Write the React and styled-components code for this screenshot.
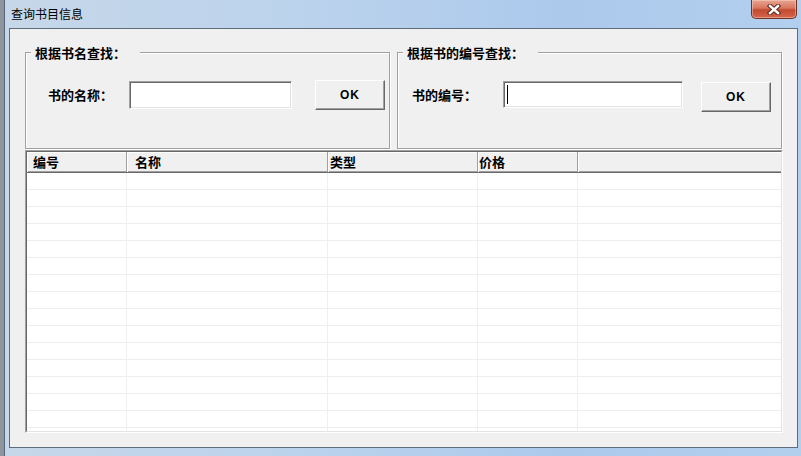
import React from "react";
import styled, { createGlobalStyle } from "styled-components";

const GlobalStyle = createGlobalStyle`
  html, body {
    margin: 0;
    padding: 0;
    background: #8e959c;
    overflow: hidden;
  }
  * {
    box-sizing: border-box;
  }
`;

const FONT = `"Noto Sans CJK SC", "DejaVu Sans", sans-serif`;

const columns = [
  { name: "编号", w: 100, pad: 6 },
  { name: "名称", w: 201, pad: 8 },
  { name: "类型", w: 150, pad: 2 },
  { name: "价格", w: 100, pad: 1 },
];

const rows = Array.from({ length: 16 });

const Window = styled.div`
  margin-left: 4px;
  width: 797px;
  height: 456px;
  border-left: 1px solid #55677a;
  background: linear-gradient(
    90deg,
    #c6d7e9 0%,
    #bcd3ec 35%,
    #acc9ec 70%,
    #b3cfee 100%
  );
  display: flex;
  flex-direction: column;
  font-family: ${FONT};
`;

const TitleBar = styled.div`
  height: 28px;
  display: flex;
  align-items: flex-start;
  padding-left: 6px;
  padding-right: 4px;
`;

const Title = styled.span`
  margin-top: 6px;
  font-size: 12px;
  line-height: 16px;
  color: #000;
`;

const CloseButton = styled.div`
  margin-left: auto;
  width: 46px;
  height: 19px;
  border: 1px solid #6e3326;
  border-top: none;
  border-radius: 0 0 5px 5px;
  background: linear-gradient(
    180deg,
    #e8a592 0%,
    #d9765e 45%,
    #c24a30 55%,
    #d5664c 100%
  );
  box-shadow: inset 0 0 0 1px rgba(255, 220, 210, 0.45);
  display: flex;
  align-items: center;
  justify-content: center;
`;

const Client = styled.div`
  margin: 0 3px 0 4px;
  height: 420px;
  border: 1px solid #5e6d7c;
  background: #f0f0f0;
  display: flex;
  flex-direction: column;
  padding: 23px 14px 14px 15px;
`;

const GroupRow = styled.div`
  display: flex;
  gap: 7px;
`;

const GroupBox = styled.div`
  position: relative;
  width: ${(p) => p.$w}px;
  height: 97px;
  border: 1px solid #a0a0a0;
  box-shadow: inset 1px 1px 0 #fff, 1px 1px 0 #fff;
  padding: 27px 0 0 ${(p) => p.$padLeft}px;
`;

const Legend = styled.span`
  position: absolute;
  top: -8px;
  left: 5px;
  padding: 0 14px 0 4px;
  background: #f0f0f0;
  font-size: 13px;
  line-height: 15px;
  font-weight: 700;
  color: #000;
`;

const FieldRow = styled.div`
  display: flex;
  align-items: flex-start;
`;

const Label = styled.span`
  width: ${(p) => p.$w}px;
  line-height: 30px;
  font-size: 13px;
  font-weight: 700;
  color: #000;
`;

const TextBox = styled.div`
  margin-top: 1px;
  width: ${(p) => p.$w}px;
  height: ${(p) => p.$h}px;
  background: #fff;
  border-top: 1px solid #a0a0a0;
  border-left: 1px solid #a0a0a0;
  border-right: 1px solid #fff;
  border-bottom: 1px solid #fff;
  box-shadow: inset 1px 1px 0 #696969, inset -1px -1px 0 #e3e3e3;
  padding: 3px 0 0 3px;
`;

const Caret = styled.span`
  display: block;
  width: 1px;
  height: 19px;
  background: #000;
`;

const OkButton = styled.div`
  margin-left: ${(p) => p.$gap}px;
  margin-top: ${(p) => p.$top}px;
  width: 70px;
  height: 30px;
  background: #f0f0f0;
  border-top: 1px solid #fff;
  border-left: 1px solid #fff;
  border-right: 1px solid #696969;
  border-bottom: 1px solid #696969;
  box-shadow: inset -1px -1px 0 #a0a0a0;
  display: flex;
  align-items: center;
  justify-content: center;
  font-family: "Liberation Sans", Arial, sans-serif;
  font-size: 12px;
  font-weight: 700;
  letter-spacing: 1px;
  color: #000;
`;

const ListView = styled.div`
  margin-top: 1px;
  flex: 1;
  border-top: 1px solid #a0a0a0;
  border-left: 1px solid #a0a0a0;
  border-right: 1px solid #fff;
  border-bottom: 1px solid #fff;
  overflow: hidden;
`;

const ListInner = styled.div`
  height: 100%;
  background: #fff;
  border-top: 1px solid #696969;
  border-left: 1px solid #696969;
  border-right: 1px solid #e3e3e3;
  border-bottom: 1px solid #e3e3e3;
  overflow: hidden;
`;

const HeaderRow = styled.div`
  display: flex;
  height: 21px;
  background: #f0f0f0;
  border-bottom: 1px solid #696969;
`;

const HeaderCell = styled.div`
  width: ${(p) => p.$w}px;
  flex: ${(p) => (p.$fill ? 1 : "none")};
  height: 100%;
  padding-left: ${(p) => p.$pad}px;
  border-right: ${(p) => (p.$fill ? "none" : "1px solid #a0a0a0")};
  box-shadow: inset 1px 1px 0 #fff, inset 0 -1px 0 #a0a0a0;
  font-size: 13px;
  line-height: 19px;
  font-weight: 700;
  color: #000;
`;

const Row = styled.div`
  display: flex;
  height: 17px;
  border-bottom: 1px solid #eeeeee;
`;

const Cell = styled.div`
  width: ${(p) => p.$w}px;
  flex: ${(p) => (p.$fill ? 1 : "none")};
  border-right: ${(p) => (p.$fill ? "none" : "1px solid #efefef")};
`;

const CloseIcon = () => (
  <svg width="14" height="11" viewBox="0 0 14 11">
    <path
      d="M3 2 L11 9 M11 2 L3 9"
      stroke="#5a2a20"
      strokeWidth="4.4"
      strokeLinecap="square"
    />
    <path
      d="M3 2 L11 9 M11 2 L3 9"
      stroke="#fff"
      strokeWidth="2.4"
      strokeLinecap="square"
    />
  </svg>
);

export default function App() {
  return (
    <>
      <GlobalStyle />
      <Window>
        <TitleBar>
          <Title>查询书目信息</Title>
          <CloseButton>
            <CloseIcon />
          </CloseButton>
        </TitleBar>
        <Client>
          <GroupRow>
            <GroupBox $w={365} $padLeft={22}>
              <Legend>根据书名查找：</Legend>
              <FieldRow>
                <Label $w={81}>书的名称：</Label>
                <TextBox $w={163} $h={28} />
                <OkButton $gap={23} $top={0}>
                  OK
                </OkButton>
              </FieldRow>
            </GroupBox>
            <GroupBox $w={385} $padLeft={14}>
              <Legend>根据书的编号查找：</Legend>
              <FieldRow>
                <Label $w={91}>书的编号：</Label>
                <TextBox $w={180} $h={27}>
                  <Caret />
                </TextBox>
                <OkButton $gap={18} $top={2}>
                  OK
                </OkButton>
              </FieldRow>
            </GroupBox>
          </GroupRow>
          <ListView>
            <ListInner>
              <HeaderRow>
                {columns.map((c) => (
                  <HeaderCell key={c.name} $w={c.w} $pad={c.pad}>
                    {c.name}
                  </HeaderCell>
                ))}
                <HeaderCell $fill />
              </HeaderRow>
              {rows.map((_, i) => (
                <Row key={i}>
                  {columns.map((c) => (
                    <Cell key={c.name} $w={c.w} />
                  ))}
                  <Cell $fill />
                </Row>
              ))}
            </ListInner>
          </ListView>
        </Client>
      </Window>
    </>
  );
}
